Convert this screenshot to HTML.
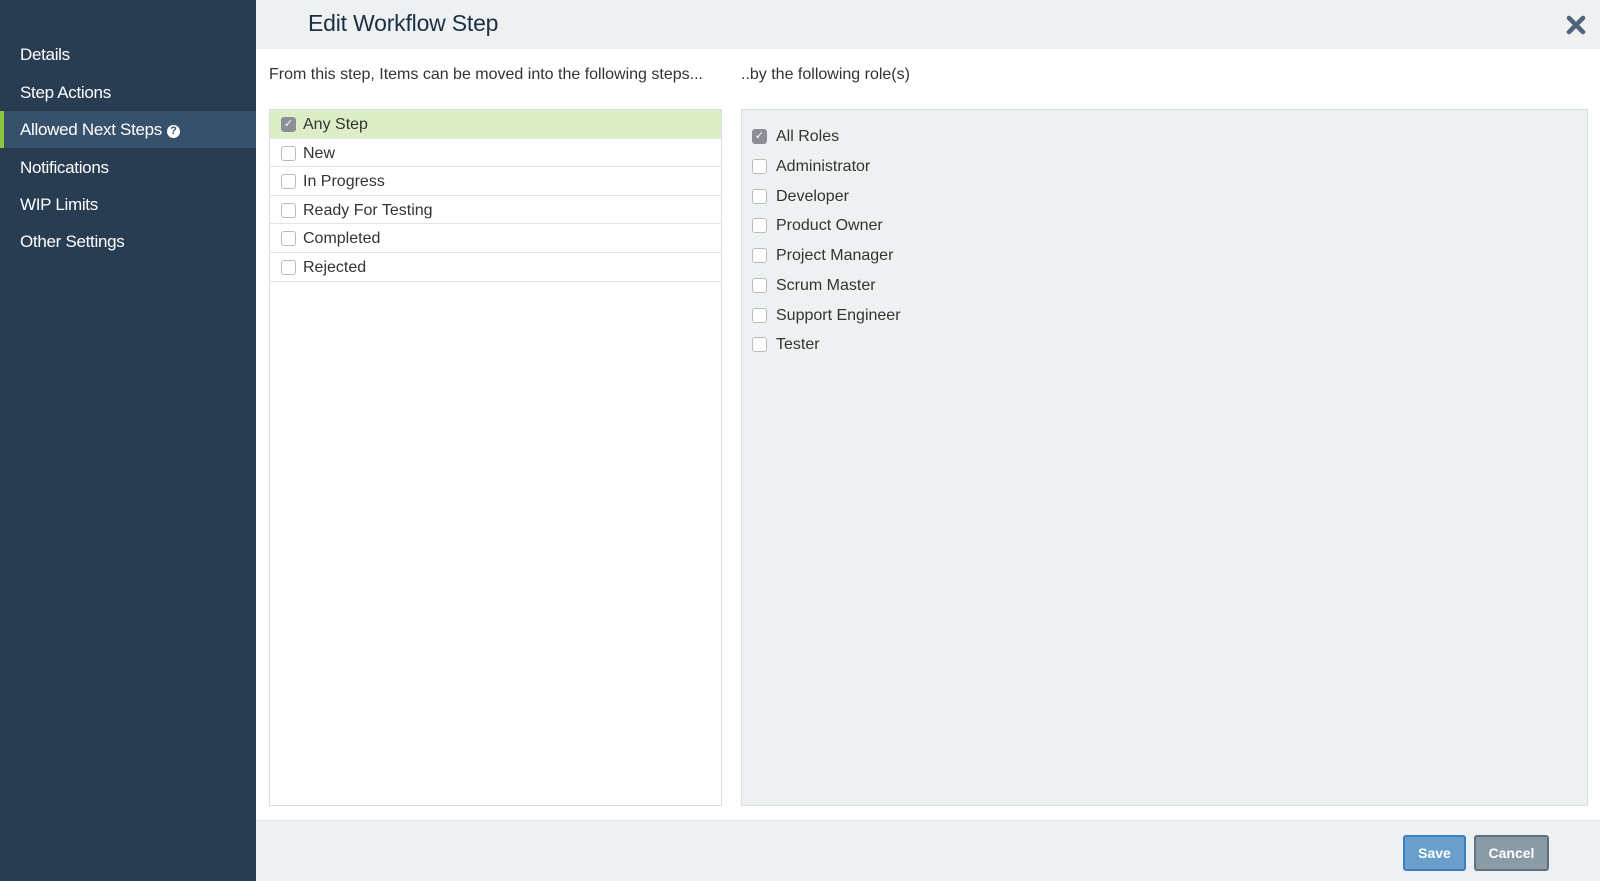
<!DOCTYPE html>
<html><head><style>
*{box-sizing:border-box;margin:0;padding:0}
body{width:1600px;height:881px;overflow:hidden;font-family:"Liberation Sans",sans-serif;background:#fff;position:relative;color:#333}
.side{position:absolute;left:0;top:0;width:256px;height:881px;background:#283c52}
.side div{position:absolute;left:0;width:256px;height:37px;line-height:37px;padding-left:20px;color:#fff;font-size:17px;letter-spacing:-0.3px}
.side .act{background:#37506b;border-left:4px solid #8cc63f;padding-left:16px}
.q{display:inline-block;width:13px;height:13px;border-radius:50%;background:#fff;color:#37506b;font-size:11px;line-height:13px;text-align:center;font-weight:bold;vertical-align:1px;margin-left:5px;letter-spacing:0}
.hdr{position:absolute;left:256px;top:0;right:0;height:49px;background:#edf1f2}
.hdr h1{position:absolute;left:52px;top:10px;font-size:23px;font-weight:normal;color:#1d2f44;letter-spacing:-0.2px}
.x{position:absolute;right:14px;top:15px}
.lbl{position:absolute;top:66px;font-size:16px;color:#333}
.box{position:absolute;top:109px;height:697px;border:1px solid #d8dfe0}
.row{height:28.6px;border-bottom:1px solid #e2e6e7;position:relative;font-size:16px;line-height:29px;padding-left:33px;color:#333}
.cb{position:absolute;left:11px;top:7px;width:15px;height:15px;border:1px solid #bbb;border-radius:3px;background:#fff}
.cb.on{background:#8a9096;border-color:#8a9096;color:#fff;font-size:11px;line-height:13px;text-align:center}
.ritem{position:absolute;left:10px;font-size:16px;padding-left:24px;line-height:20px}
.ritem .cb{left:0;top:2px}
.foot{position:absolute;left:256px;right:0;top:820px;bottom:0;background:#edf1f2;border-top:1px solid #dde3e4}
.btn{position:absolute;top:835px;height:36px;border-radius:3px;color:#fff;font-size:14px;font-weight:bold;text-align:center;line-height:33px}
</style></head><body>
<div class="side">
<div style="top:36px">Details</div>
<div style="top:74px">Step Actions</div>
<div class="act" style="top:111px">Allowed Next Steps<span class="q">?</span></div>
<div style="top:149px">Notifications</div>
<div style="top:186px">WIP Limits</div>
<div style="top:223px">Other Settings</div>
</div>
<div class="hdr"><h1>Edit Workflow Step</h1>
<svg class="x" width="20" height="20" viewBox="0 0 20 20"><path d="M3 3L17 17M17 3L3 17" stroke="#51637a" stroke-width="4.5" stroke-linecap="round"/></svg></div>
<div class="lbl" style="left:269px">From this step, Items can be moved into the following steps...</div>
<div class="lbl" style="left:741px">..by the following role(s)</div>
<div class="box" style="left:269px;width:453px;background:#fff">
<div class="row" style="background:#ddeec6"><span class="cb on">✓</span>Any Step</div>
<div class="row"><span class="cb"></span>New</div>
<div class="row"><span class="cb"></span>In Progress</div>
<div class="row"><span class="cb"></span>Ready For Testing</div>
<div class="row"><span class="cb"></span>Completed</div>
<div class="row"><span class="cb"></span>Rejected</div>
</div>
<div class="box" style="left:741px;width:847px;background:#edf1f2">
<div class="ritem" style="top:17px"><span class="cb on">✓</span>All Roles</div>
<div class="ritem" style="top:47px"><span class="cb"></span>Administrator</div>
<div class="ritem" style="top:77px"><span class="cb"></span>Developer</div>
<div class="ritem" style="top:106px"><span class="cb"></span>Product Owner</div>
<div class="ritem" style="top:136px"><span class="cb"></span>Project Manager</div>
<div class="ritem" style="top:166px"><span class="cb"></span>Scrum Master</div>
<div class="ritem" style="top:196px"><span class="cb"></span>Support Engineer</div>
<div class="ritem" style="top:225px"><span class="cb"></span>Tester</div>
</div>
<div class="foot"></div>
<div class="btn" style="left:1403px;width:63px;background:#6a9fcc;border:2px solid #3d7fc0">Save</div>
<div class="btn" style="left:1474px;width:75px;background:#8a9ba6;border:2px solid #5f7180">Cancel</div>
</body></html>
